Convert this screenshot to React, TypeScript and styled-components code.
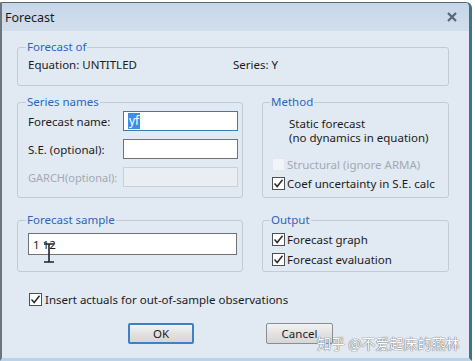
import styled, { createGlobalStyle } from "styled-components";

const FONT = `"Noto Sans", "DejaVu Sans", sans-serif`;

const GlobalStyle = createGlobalStyle`
  html, body {
    margin: 0;
    padding: 0;
    background: #ffffff;
  }
  body {
    font-family: ${FONT};
    font-size: 11.5px;
    color: #1b1b1b;
  }
`;

export default function App() {
  return (
    <>
      <GlobalStyle />
      <Window>
        <TitleBar>
          <Title>Forecast</Title>
          <CloseIcon width="12" height="10" viewBox="0 0 12 10">
            <path d="M2 1 L10 9 M10 1 L2 9" stroke="#56657a" strokeWidth="2.2" />
          </CloseIcon>
        </TitleBar>

        <Body>
          <Group $width={432} $height={46}>
            <Legend>Forecast of</Legend>
            <InfoRow>
              <span>Equation: UNTITLED</span>
              <span>Series: Y</span>
            </InfoRow>
          </Group>

          <Row $gap={19} $top={9}>
            <Group $width={226} $height={103}>
              <Legend>Series names</Legend>
              <FormGrid>
                <FieldLabel>Forecast name:</FieldLabel>
                <TextBox $focused>
                  <Selection>yf</Selection>
                </TextBox>
                <FieldLabel>S.E. (optional):</FieldLabel>
                <TextBox />
                <FieldLabel $disabled>GARCH(optional):</FieldLabel>
                <TextBox $disabled />
              </FormGrid>
            </Group>

            <Group $width={187} $height={103} $padLeft={9}>
              <Legend>Method</Legend>
              <StaticText>
                <div>Static forecast</div>
                <div>(no dynamics in equation)</div>
              </StaticText>
              <CheckList $top={12} $gap={5}>
                <CheckRow $disabled>
                  <CheckBox $disabled />
                  Structural (ignore ARMA)
                </CheckRow>
                <CheckRow>
                  <CheckBox checked />
                  Coef uncertainty in S.E. calc
                </CheckRow>
              </CheckList>
            </Group>
          </Row>

          <Row $gap={19} $top={15}>
            <Group $width={226} $height={59}>
              <Legend>Forecast sample</Legend>
              <SampleBox>
                1 12
                <IBeam width="12" height="20" viewBox="0 0 12 20">
                  <path
                    d="M1 1 H11 M6 1 V19 M1 19 H11"
                    stroke="#222"
                    strokeWidth="1.6"
                    fill="none"
                  />
                </IBeam>
              </SampleBox>
            </Group>

            <Group $width={187} $height={59} $padLeft={9}>
              <Legend>Output</Legend>
              <CheckList $top={5} $gap={6}>
                <CheckRow>
                  <CheckBox checked />
                  Forecast graph
                </CheckRow>
                <CheckRow>
                  <CheckBox checked />
                  Forecast evaluation
                </CheckRow>
              </CheckList>
            </Group>
          </Row>

          <ActualsRow>
            <CheckBox checked />
            Insert actuals for out-of-sample observations
          </ActualsRow>

          <ButtonRow>
            <Button $default>OK</Button>
            <Button>Cancel</Button>
          </ButtonRow>
        </Body>

        <Watermark>知乎 @不爱起床的燕林</Watermark>
      </Window>
    </>
  );
}

function CheckBox({ checked, $disabled }: { checked?: boolean; $disabled?: boolean }) {
  return (
    <Box $disabled={$disabled}>
      {checked && (
        <svg width="11" height="11" viewBox="0 0 11 11">
          <path
            d="M1.5 5.5 L4.2 8.5 L9.5 1.8"
            stroke="#2b2b2b"
            strokeWidth="1.5"
            fill="none"
          />
        </svg>
      )}
    </Box>
  );
}

const Window = styled.div`
  position: relative;
  box-sizing: border-box;
  width: 472px;
  height: 359px;
  margin-top: 2px;
  display: flex;
  flex-direction: column;
  background: #e1e9f3;
  border-top: 1px solid #5c6470;
  border-left: 2px solid #6c747e;
  border-right: 3px solid #3f7487;
  border-bottom: 3px solid #bcd2e8;
  border-top-right-radius: 6px;
  overflow: hidden;
`;

const TitleBar = styled.div`
  height: 28px;
  flex: none;
  display: flex;
  align-items: center;
  justify-content: space-between;
  padding: 0 11px 0 3px;
  background: linear-gradient(#c6d6e9, #d2deec);
`;

const Title = styled.span`
  font-size: 12.5px;
  color: #1a1a1a;
`;

const CloseIcon = styled.svg`
  display: block;
`;

const Body = styled.div`
  display: flex;
  flex-direction: column;
  padding: 9px 0 0 15px;
`;

const Group = styled.fieldset<{ $width: number; $height: number; $padLeft?: number }>`
  box-sizing: border-box;
  width: ${(p) => p.$width}px;
  height: ${(p) => p.$height}px;
  min-width: 0;
  margin: 0;
  padding: 0 4px 0 ${(p) => p.$padLeft ?? 10}px;
  border: 1px solid #c2cad4;
  border-radius: 3px;
`;

const Legend = styled.legend`
  padding: 0 1px;
  margin-left: -2px;
  font-size: 11.5px;
  line-height: 14px;
  color: #2a66c2;
`;

const Row = styled.div<{ $gap: number; $top: number }>`
  display: flex;
  gap: ${(p) => p.$gap}px;
  margin-top: ${(p) => p.$top}px;
`;

const InfoRow = styled.div`
  display: grid;
  grid-template-columns: 205px auto;
  margin-top: 4px;
  line-height: 14px;
`;

const FormGrid = styled.div`
  display: grid;
  grid-template-columns: 95px 115px;
  grid-auto-rows: 20px;
  row-gap: 8px;
  align-items: center;
  margin-top: 2px;
`;

const FieldLabel = styled.span<{ $disabled?: boolean }>`
  white-space: nowrap;
  font-size: ${(p) => (p.$disabled ? 11 : 11.5)}px;
  color: ${(p) => (p.$disabled ? "#a3a9b1" : "#1b1b1b")};
`;

const TextBox = styled.div<{ $focused?: boolean; $disabled?: boolean }>`
  box-sizing: border-box;
  height: 20px;
  display: flex;
  align-items: center;
  padding-left: 4px;
  background: ${(p) => (p.$disabled ? "#e9eef4" : "#ffffff")};
  border: 1px solid
    ${(p) => (p.$focused ? "#3d7bad" : p.$disabled ? "#c9d0d8" : "#6f7479")};
`;

const Selection = styled.span`
  background: #3d8ee6;
  color: #ffffff;
  font-size: 12px;
  line-height: 16px;
  padding: 0 1px;
`;

const StaticText = styled.div`
  margin-top: 8px;
  padding-left: 17px;
  line-height: 14px;
`;

const CheckList = styled.div<{ $top: number; $gap: number }>`
  display: flex;
  flex-direction: column;
  gap: ${(p) => p.$gap}px;
  margin-top: ${(p) => p.$top}px;
`;

const CheckRow = styled.label<{ $disabled?: boolean }>`
  display: flex;
  align-items: center;
  gap: 2px;
  height: 14px;
  white-space: nowrap;
  color: ${(p) => (p.$disabled ? "#a3a9b1" : "#1b1b1b")};
`;

const Box = styled.span<{ $disabled?: boolean }>`
  box-sizing: border-box;
  flex: none;
  width: 13px;
  height: 13px;
  display: flex;
  align-items: center;
  justify-content: center;
  background: ${(p) => (p.$disabled ? "#f1f4f8" : "#ffffff")};
  border: 1px solid ${(p) => (p.$disabled ? "#e4e8ee" : "#4c4f54")};
`;

const SampleBox = styled.div`
  position: relative;
  box-sizing: border-box;
  width: 209px;
  height: 22px;
  margin-top: 6px;
  display: flex;
  align-items: center;
  padding-left: 4px;
  background: #ffffff;
  border: 1px solid #6f7479;
`;

const IBeam = styled.svg`
  position: absolute;
  left: 14px;
  top: 9px;
`;

const ActualsRow = styled(CheckRow)`
  margin-top: 20px;
  padding-left: 12px;
  gap: 3px;
`;

const ButtonRow = styled.div`
  display: flex;
  gap: 72px;
  margin-top: 17px;
  padding-left: 111px;
`;

const Button = styled.button<{ $default?: boolean }>`
  box-sizing: border-box;
  width: ${(p) => (p.$default ? 66 : 67)}px;
  height: 21px;
  padding: 0;
  font-family: ${FONT};
  font-size: 11.5px;
  color: #1b1b1b;
  background: linear-gradient(#f3f3f3, #e2e2e2 50%, #d6d6d6);
  border: ${(p) => (p.$default ? "2px solid #3b82c4" : "1px solid #8a8d91")};
  border-radius: 2px;
`;

const Watermark = styled.div`
  position: absolute;
  left: 315px;
  top: 331px;
  font-family: "Noto Sans CJK SC", sans-serif;
  font-size: 14px;
  line-height: 18px;
  color: #ffffff;
  text-shadow: 0 0 1px #5a5a5a, 0 0 1px #5a5a5a;
  white-space: nowrap;
`;
